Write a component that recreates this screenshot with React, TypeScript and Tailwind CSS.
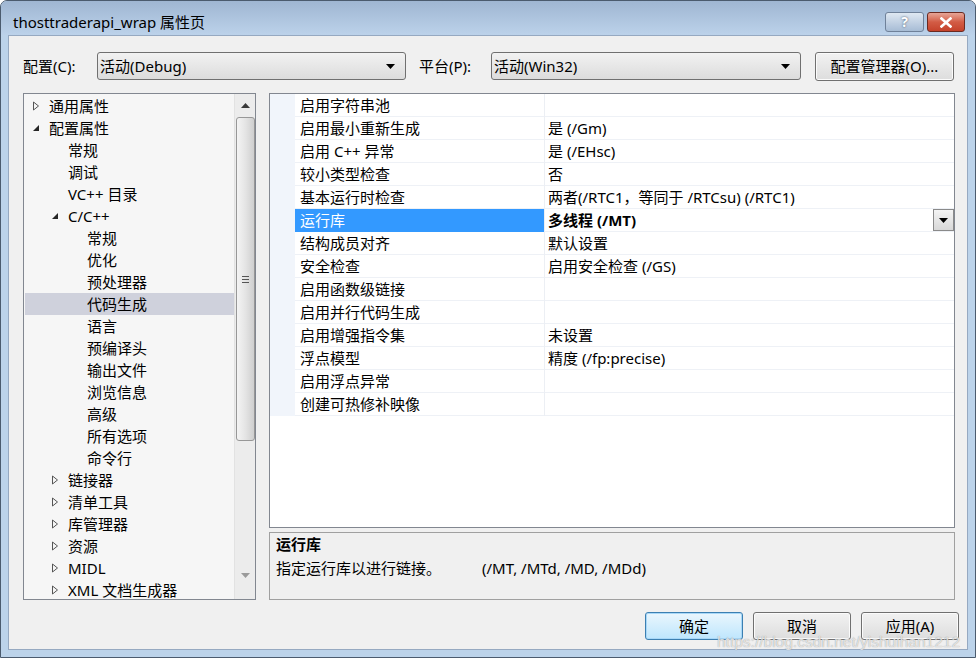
/* App.tsx — VS2010 项目属性页 (C/C++ → 代码生成) */
const FONT = "font-['Noto_Sans','Noto_Sans_CJK_SC',sans-serif]";

type TreeItem = { label: string; level: number; state?: "open" | "closed"; selected?: boolean };

const tree: TreeItem[] = [
  { label: "通用属性", level: 0, state: "closed" },
  { label: "配置属性", level: 0, state: "open" },
  { label: "常规", level: 1 },
  { label: "调试", level: 1 },
  { label: "VC++ 目录", level: 1 },
  { label: "C/C++", level: 1, state: "open" },
  { label: "常规", level: 2 },
  { label: "优化", level: 2 },
  { label: "预处理器", level: 2 },
  { label: "代码生成", level: 2, selected: true },
  { label: "语言", level: 2 },
  { label: "预编译头", level: 2 },
  { label: "输出文件", level: 2 },
  { label: "浏览信息", level: 2 },
  { label: "高级", level: 2 },
  { label: "所有选项", level: 2 },
  { label: "命令行", level: 2 },
  { label: "链接器", level: 1, state: "closed" },
  { label: "清单工具", level: 1, state: "closed" },
  { label: "库管理器", level: 1, state: "closed" },
  { label: "资源", level: 1, state: "closed" },
  { label: "MIDL", level: 1, state: "closed" },
  { label: "XML 文档生成器", level: 1, state: "closed" },
];

const props: [string, string][] = [
  ["启用字符串池", ""],
  ["启用最小重新生成", "是 (/Gm)"],
  ["启用 C++ 异常", "是 (/EHsc)"],
  ["较小类型检查", "否"],
  ["基本运行时检查", "两者(/RTC1，等同于 /RTCsu) (/RTC1)"],
  ["运行库", "多线程 (/MT)"],
  ["结构成员对齐", "默认设置"],
  ["安全检查", "启用安全检查 (/GS)"],
  ["启用函数级链接", ""],
  ["启用并行代码生成", ""],
  ["启用增强指令集", "未设置"],
  ["浮点模型", "精度 (/fp:precise)"],
  ["启用浮点异常", ""],
  ["创建可热修补映像", ""],
];

function DownArrow() {
  return (
    <svg width="9" height="5" viewBox="0 0 9 5">
      <path d="M0 0h9L4.5 5z" fill="#000" />
    </svg>
  );
}

function Expander({ state }: { state?: "open" | "closed" }) {
  if (state === "open")
    return (
      <svg width="8" height="8" viewBox="0 0 8 8">
        <path d="M7 1v6H1z" fill="#262626" />
      </svg>
    );
  if (state === "closed")
    return (
      <svg width="8" height="10" viewBox="0 0 8 10">
        <path d="M1.5 1l5 4-5 4z" fill="none" stroke="#555" strokeWidth="1" />
      </svg>
    );
  return null;
}

function Combo({ value, width }: { value: string; width: string }) {
  return (
    <div
      className={`${width} h-[28px] flex items-center rounded-[3px] border border-[#707070] bg-gradient-to-b from-[#f2f2f2] to-[#dcdcdc] pl-[2px] pr-[10px] text-[15px] text-black`}
    >
      <span className="flex-1">{value}</span>
      <DownArrow />
    </div>
  );
}

function Button({ label, primary }: { label: string; primary?: boolean }) {
  return (
    <div
      className={`w-[98px] h-[28px] flex items-center justify-center rounded-[3px] border text-[15px] text-black ${
        primary
          ? "border-[#3c7fb1] bg-gradient-to-b from-[#eaf6fd] to-[#bee6fd] shadow-[inset_0_0_0_1px_#a8d8f8]"
          : "border-[#707070] bg-gradient-to-b from-[#f2f2f2] to-[#dddddd] shadow-[inset_0_0_0_1px_#fbfbfb]"
      }`}
    >
      {label}
    </div>
  );
}

function TreePanel() {
  return (
    <div className="w-[233px] h-[507px] border border-[#828790] bg-[#f6f6f6] flex overflow-hidden">
      <div className="flex-1 pl-[1px] pt-[1px] overflow-hidden">
        {tree.map((t, i) => (
          <div
            key={i}
            className={`h-[22px] flex items-center text-[15px] text-black whitespace-nowrap ${
              t.selected ? "bg-[#cfd1dc]" : ""
            }`}
            style={{ paddingLeft: 7 + t.level * 19 }}
          >
            <span className="w-[17px] flex items-center">
              <Expander state={t.state} />
            </span>
            <span>{t.label}</span>
          </div>
        ))}
      </div>
      {/* 滚动条 */}
      <div className="w-[21px] bg-[#ececec] flex flex-col items-center border-l border-[#e2e2e2]">
        <div className="h-[23px] flex items-center justify-center">
          <svg width="9" height="5" viewBox="0 0 9 5">
            <path d="M4.5 0L9 5H0z" fill="#3a3a3a" />
          </svg>
        </div>
        <div className="w-[19px] h-[324px] rounded-[3px] border border-[#979797] bg-gradient-to-r from-[#f4f4f4] via-[#e4e4e4] to-[#cfcfcf] flex flex-col items-center justify-center gap-[2px]">
          <div className="w-[7px] h-[1px] bg-[#555]" />
          <div className="w-[7px] h-[1px] bg-[#555]" />
          <div className="w-[7px] h-[1px] bg-[#555]" />
        </div>
        <div className="flex-1" />
        <div className="h-[30px] flex items-start justify-center pt-[4px]">
          <svg width="9" height="5" viewBox="0 0 9 5">
            <path d="M0 0h9L4.5 5z" fill="#9a9a9a" />
          </svg>
        </div>
      </div>
    </div>
  );
}

function PropertyGrid() {
  return (
    <div className="h-[435px] border border-[#828790] bg-white overflow-hidden">
      {props.map(([name, value], i) => {
        const sel = name === "运行库";
        return (
          <div key={i} className="h-[23px] flex text-[15px] text-black">
            <div className="w-[25px] bg-[#f1f5fb]" />
            <div
              className={`w-[249px] flex items-center pl-[5px] border-b ${
                sel ? "bg-[#3399ff] text-white border-[#3399ff]" : "border-[#eef1f6]"
              }`}
            >
              {name}
            </div>
            <div className="w-[1px] bg-[#eceff4]" />
            <div className={`flex-1 flex items-center pl-[3px] border-b border-[#eef1f6] ${sel ? "font-bold" : ""}`}>
              <span className="flex-1">{value}</span>
              {sel && (
                <div className="w-[21px] h-[22px] border border-[#8a8a8a] bg-gradient-to-b from-[#f4f4f4] to-[#d8d8d8] flex items-center justify-center">
                  <DownArrow />
                </div>
              )}
            </div>
          </div>
        );
      })}
    </div>
  );
}

export default function App() {
  return (
    <div
      className={`relative w-[976px] h-[658px] flex flex-col rounded-t-[7px] border border-[#4b5b6e] bg-[#bcd3ea] ${FONT}`}
    >
      {/* 标题栏 */}
      <div className="h-[34px] flex items-start rounded-t-[6px] bg-gradient-to-b from-[#9fb6d2] to-[#bcd2ea]">
        <div className="pl-[12px] pt-[11px] text-[15px] text-black leading-[20px]">thosttraderapi_wrap 属性页</div>
        <div className="ml-auto mr-[10px] mt-[11px] flex gap-[3px]">
          <div className="w-[39px] h-[20px] rounded-[3px] border border-[#6f8199] bg-gradient-to-b from-[#dfe8f2] to-[#a7bcd5] flex items-center justify-center text-white text-[14px] font-bold leading-none [text-shadow:0_0_2px_#34475f]">
            ?
          </div>
          <div className="w-[38px] h-[20px] rounded-[3px] border border-[#6b2a21] bg-gradient-to-b from-[#e6a597] via-[#d25c45] to-[#c5422b] flex items-center justify-center">
            <svg width="12" height="11" viewBox="0 0 12 11">
              <path d="M1.5 1.5l9 8M10.5 1.5l-9 8" stroke="#fff" strokeWidth="2.6" strokeLinecap="square" />
            </svg>
          </div>
        </div>
      </div>

      {/* 内容区 */}
      <div className="flex-1 mx-[7px] mb-[7px] border border-[#96a9c1] bg-[#f0f0f0] pl-[14px] pr-[12px] pt-[16px] flex flex-col">
        <div className="h-[28px] flex items-center text-[15px] text-black">
          <span className="w-[74px]">配置(C):</span>
          <Combo value="活动(Debug)" width="w-[309px]" />
          <span className="w-[85px] pl-[13px]">平台(P):</span>
          <Combo value="活动(Win32)" width="w-[310px]" />
          <div className="ml-[14px] w-[139px] h-[29px] flex items-center justify-center rounded-[3px] border border-[#707070] bg-gradient-to-b from-[#f2f2f2] to-[#dddddd] shadow-[inset_0_0_0_1px_#fbfbfb]">
            配置管理器(O)...
          </div>
        </div>

        <div className="mt-[13px] flex gap-[13px]">
          <TreePanel />
          <div className="w-[686px] flex flex-col">
            <PropertyGrid />
            <div className="mt-[4px] h-[68px] border border-[#a0a0a0] bg-[#f0f0f0] pl-[6px] pt-[1px] text-[15px] text-black">
              <div className="h-[20px] flex items-center font-bold">运行库</div>
              <div className="mt-[4px] h-[20px] flex items-center">
                <span className="w-[206px]">指定运行库以进行链接。</span>
                <span>(/MT, /MTd, /MD, /MDd)</span>
              </div>
            </div>
          </div>
        </div>

        <div className="mt-[12px] -mr-[4px] flex justify-end gap-[10px]">
          <Button label="确定" primary />
          <Button label="取消" />
          <Button label="应用(A)" />
        </div>
      </div>

      {/* 水印 */}
      <div className="absolute left-[716px] top-[629px] font-['Liberation_Sans',sans-serif] text-[15.5px] text-white/70 [text-shadow:0_0_1px_#8c8c8c]">
        https://blog.csdn.net/yishuihan1212
      </div>
    </div>
  );
}
